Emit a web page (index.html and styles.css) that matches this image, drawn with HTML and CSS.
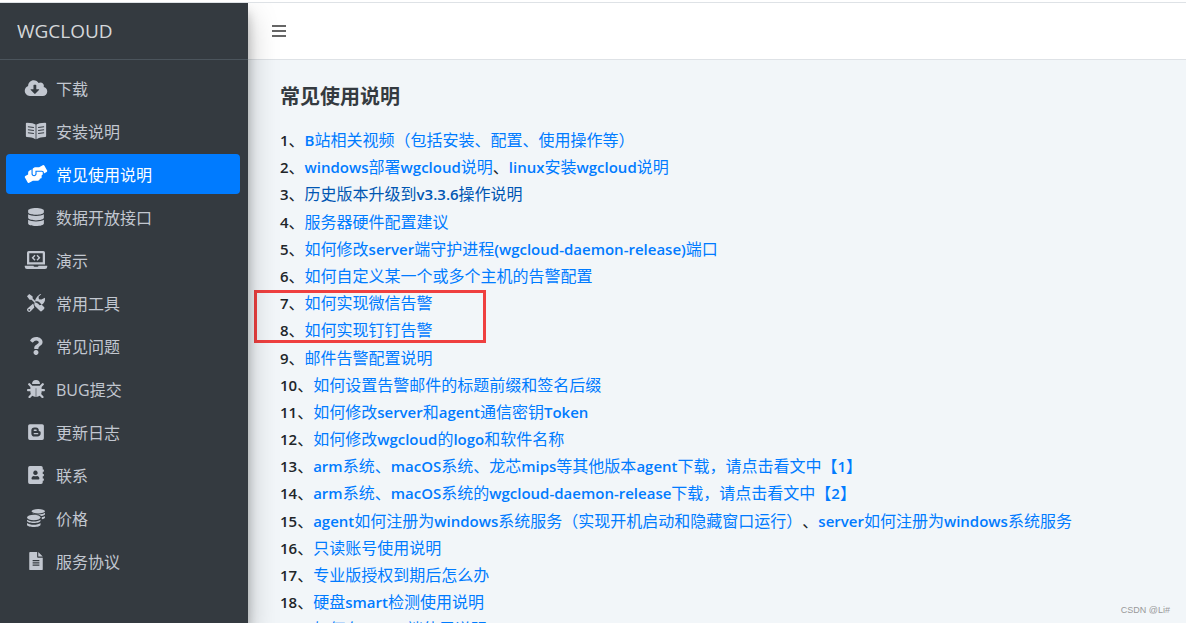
FILE: index.html
```html
<!DOCTYPE html>
<html lang="zh-CN">
<head>
<meta charset="utf-8">
<title>WGCLOUD</title>
<link rel="stylesheet" href="styles.css">
</head>
<body>
<div class="app">
  <aside class="sidebar">
    <a class="brand" href="#">WGCLOUD</a>
    <nav class="menu">
      <a class="item" href="#"><svg class="icon" viewBox="0 0 640 512"><path d="M537.600 226.600c4.100-10.700 6.400-22.400 6.400-34.600 0-53-43-96-96-96-19.700 0-38.100 6-53.300 16.200C367 64.200 315.300 32 256 32c-88.400 0-160 71.600-160 160 0 2.700.1 5.400.2 8.100C40.200 219.800 0 273.200 0 336c0 79.500 64.500 144 144 144h368c70.700 0 128-57.300 128-128 0-61.900-44-113.600-102.400-125.400zm-132.900 88.700L299.300 420.700c-6.200 6.200-16.400 6.200-22.600 0L171.300 315.300c-10.100-10.100-2.900-27.300 11.300-27.300H248V176c0-8.800 7.200-16 16-16h48c8.800 0 16 7.200 16 16v112h65.400c14.200 0 21.400 17.200 11.300 27.300z"/></svg>下载</a>
      <a class="item" href="#"><svg class="icon" viewBox="0 0 640 512"><path fill-rule="evenodd" d="M308 72C270 40 190 18 60 18q-28 0-28 28v350q0 26 28 28c100 4 170 12 218 50q30 20 30 20zM332 72c38-32 118-54 248-54q28 0 28 28v350q0 26-28 28c-100 4-170 12-218 50l-30 20zM90 120v30l170 22v-30zM90 205v30l170 22v-30zM90 290v30l170 22v-30zM550 120v30l-170 22v-30zM550 205v30l-170 22v-30zM550 290v30l-170 22v-30z"/></svg>安装说明</a>
      <a class="item active" href="#" aria-current="page"><svg class="icon" viewBox="0 0 640 512"><path d="M488 192H336v56c0 39.700-32.300 72-72 72s-72-32.300-72-72V126.400l-64.900 39C107.800 176.900 96 197.800 96 220.200v47.300l-80 46.200C.7 322.500-4.600 342.100 4.300 357.400l80 138.600c8.800 15.300 28.400 20.500 43.700 11.700L231.400 448H368c35.300 0 64-28.700 64-64h16c17.700 0 32-14.300 32-32v-64h8c13.300 0 24-10.700 24-24v-48c0-13.300-10.700-24-24-24zm147.700-37.400L555.700 16C546.900.7 527.300-4.500 512 4.300L408.600 64H306.400c-12 0-23.700 3.400-33.900 9.700L239 94.600c-9.400 5.800-15 16.100-15 27.100V248c0 22.100 17.900 40 40 40s40-17.900 40-40v-88h184c30.900 0 56 25.100 56 56v28.500l80-46.200c15.300-8.900 20.500-28.400 11.700-43.700z"/></svg>常见使用说明</a>
      <a class="item" href="#"><svg class="icon" viewBox="0 0 448 512"><path d="M448 73v46c0 40-100 73-224 73S0 159 0 119V73C0 33 100 0 224 0s224 33 224 73zm0 103v103c0 40-100 73-224 73S0 319 0 279V176c48 33 136 48 224 48s176-15 224-48zm0 160v103c0 40-100 73-224 73S0 479 0 439V336c48 33 136 48 224 48s176-15 224-48z"/></svg>数据开放接口</a>
      <a class="item" href="#"><svg class="icon" viewBox="0 0 640 512"><path fill-rule="evenodd" d="M112 0h416q48 0 48 48v336H64V48Q64 0 112 0zm16 64v256h384V64zM0 416h250q0 32 28 32h84q28 0 28-32h250v32q-4 64-64 64H64Q4 512 0 448z"/><path d="M278 108l28 28-54 56 54 56-28 28-84-84zM362 108l-28 28 54 56-54 56 28 28 84-84z"/></svg>演示</a>
      <a class="item" href="#"><svg class="icon" viewBox="0 0 512 512"><path fill-rule="evenodd" d="M64 0l96 72v56l88 88c33-15 72-10 96 14l117 117q18 18 18 18 33 33 0 66l-48 48q-34 33-66 0L231 345c-26-26-28-65-14-97l-88-88H73L0 64zM508 109c14 57-1 119-45 163-29 29-66 44-104 46-50-52-84-79-124-77-9-60 7-110 33-136C311 54 373-9 403 4L329 78l11 68 68 11zM195 324c0 24 6 40 14 62L105 491q-42 42-84 0-42-42 0-84l156-136zM64 424a24 24 0 1 0 .1 0z"/></svg>常用工具</a>
      <a class="item" href="#"><svg class="icon" viewBox="0 0 384 512"><path d="M202 0C122 0 69 33 28 91q-8 12 4 22l56 42q11 8 21-3c29-36 48-56 89-56 32 0 72 21 72 52 0 64-130 60-130 176v6q0 14 14 14h94q14 0 14-14c0-75 117-85 117-185C379 62 292 0 202 0zM192 373a70 70 0 1 0 .1 0z"/></svg>常见问题</a>
      <a class="item" href="#"><svg class="icon" viewBox="0 0 512 512"><path d="M144 112a112 112 0 0 1 224 0zM511 289c-1 18-16 31-33 31h-62v16c0 22-5 43-14 62l61 61a32 32 0 0 1-46 45l-55-55c-28 20-62 31-98 31V232h-16v248c-36 0-70-11-98-31l-55 55a32 32 0 0 1-46-45l61-61c-9-19-14-40-14-62v-16H34c-18 0-33-13-34-31-1-18 14-33 32-33h64v-59l-55-54a32 32 0 0 1 46-46l62 63h214l62-63a32 32 0 0 1 46 46l-55 54v59h64c18 0 33 15 31 33z"/></svg>BUG提交</a>
      <a class="item" href="#"><svg class="icon" viewBox="0 0 448 512"><path fill-rule="evenodd" d="M48 32h352q48 0 48 48v352q0 48-48 48H48q-48 0-48-48V80q0-48 48-48zM178 128c-54 0-86 34-86 84v84c0 54 34 88 88 88h88c54 0 88-34 88-82v-32c0-26-16-38-38-38-14 0-14-8-14-24 0-50-34-80-80-80zm0 60h48c30 0 30 38 0 38h-48c-30 0-30-38 0-38zm0 94h92c30 0 30 40 0 40h-92c-30 0-30-40 0-40z"/></svg>更新日志</a>
      <a class="item" href="#"><svg class="icon" viewBox="0 0 448 512"><path fill-rule="evenodd" d="M48 0h320q48 0 48 48v48h20q12 0 12 12v40q0 12-12 12h-20v64h20q12 0 12 12v40q0 12-12 12h-20v64h20q12 0 12 12v40q0 12-12 12h-20v48q0 48-48 48H48q-48 0-48-48V48Q0 0 48 0zm160 128a64 64 0 1 0 .1 0zM96 358q0 26 26 26h172q26 0 26-26c0-50-30-77-67-77q-45 16-90 0c-37 0-67 27-67 77z"/></svg>联系</a>
      <a class="item" href="#"><svg class="icon" viewBox="0 0 512 512"><ellipse cx="320" cy="64" rx="192" ry="64"/><path d="M512 110v34c0 25-44 48-108 58-34-34-100-50-180-54-34-8-66-18-84-34 82 52 292 56 372-4zM512 206v34c0 22-36 42-92 54v-58q58-10 92-30z"/><ellipse cx="192" cy="240" rx="192" ry="80"/><path d="M0 304c80 66 304 66 384 0v32c0 84-384 84-384 0zM0 400c80 66 304 66 384 0v48c0 84-384 84-384 0z"/></svg>价格</a>
      <a class="item" href="#"><svg class="icon" viewBox="0 0 384 512"><path fill-rule="evenodd" d="M24 0h200v136q0 24 24 24h136v328q0 24-24 24H24q-24 0-24-24V24Q0 0 24 0zM96 224v40h192v-40zM96 288v40h192v-40zM96 352v40h192v-40zM256 0l128 128H256z"/></svg>服务协议</a>
    </nav>
  </aside>
  <div class="main">
    <header class="topbar">
      <button class="toggle" type="button" aria-label="菜单"><svg class="bars" viewBox="0 0 14 14"><path d="M0 1h14v2H0zM0 6h14v2H0zM0 11h14v2H0z"/></svg></button>
    </header>
    <main class="content">
      <h1 class="title">常见使用说明</h1>
      <div class="list">
        <p class="row"><b>1</b>、<a href="#"><b>B</b>站相关视频（包括安装、配置、使用操作等）</a></p>
        <p class="row"><b>2</b>、<a href="#"><b>windows</b>部署<b>wgcloud</b>说明</a>、<a href="#"><b>linux</b>安装<b>wgcloud</b>说明</a></p>
        <p class="row"><b>3</b>、<a class="hovered" href="#">历史版本升级到<b>v3.3.6</b>操作说明</a></p>
        <p class="row"><b>4</b>、<a href="#">服务器硬件配置建议</a></p>
        <p class="row"><b>5</b>、<a href="#">如何修改<b>server</b>端守护进程<b>(wgcloud-daemon-release)</b>端口</a></p>
        <p class="row"><b>6</b>、<a href="#">如何自定义某一个或多个主机的告警配置</a></p>
        <div class="marked">
          <p class="row"><b>7</b>、<a href="#">如何实现微信告警</a></p>
          <p class="row"><b>8</b>、<a href="#">如何实现钉钉告警</a></p>
        </div>
        <p class="row"><b>9</b>、<a href="#">邮件告警配置说明</a></p>
        <p class="row"><b>10</b>、<a href="#">如何设置告警邮件的标题前缀和签名后缀</a></p>
        <p class="row"><b>11</b>、<a href="#">如何修改<b>server</b>和<b>agent</b>通信密钥<b>Token</b></a></p>
        <p class="row"><b>12</b>、<a href="#">如何修改<b>wgcloud</b>的<b>logo</b>和软件名称</a></p>
        <p class="row"><b>13</b>、<a href="#"><b>arm</b>系统、<b>macOS</b>系统、龙芯<b>mips</b>等其他版本<b>agent</b>下载，请点击看文中【<b>1</b>】</a></p>
        <p class="row"><b>14</b>、<a href="#"><b>arm</b>系统、<b>macOS</b>系统的<b>wgcloud-daemon-release</b>下载，请点击看文中【<b>2</b>】</a></p>
        <p class="row"><b>15</b>、<a href="#"><b>agent</b>如何注册为<b>windows</b>系统服务（实现开机启动和隐藏窗口运行）</a>、<a href="#"><b>server</b>如何注册为<b>windows</b>系统服务</a></p>
        <p class="row"><b>16</b>、<a href="#">只读账号使用说明</a></p>
        <p class="row"><b>17</b>、<a href="#">专业版授权到期后怎么办</a></p>
        <p class="row"><b>18</b>、<a href="#">硬盘<b>smart</b>检测使用说明</a></p>
        <p class="row"><b>19</b>、<a href="#">如何在<b>server</b>端使用说明</a></p>
      </div>
    </main>
  </div>
  <span class="watermark">CSDN @Li#</span>
</div>
</body>
</html>
```
FILE: styles.css
```css
*, *::before { box-sizing: border-box; }
body {
  margin: 0;
  padding-top: 2px;
  font-family: "Open Sans", "Noto Sans CJK SC", sans-serif;
  font-size: 16px;
  color: #212529;
  background: #fff;
}
a { color: #007bff; text-decoration: none; }
.app {
  position: relative;
  display: flex;
  height: calc(100vh - 2px);
  overflow: hidden;
  border-top: 1px solid #dee2e6;
  background: #f2f6f9;
}
.sidebar {
  flex: 0 0 248px;
  background: #343a40;
  box-shadow: 0 14px 28px rgba(0,0,0,.25), 0 10px 10px rgba(0,0,0,.22);
  z-index: 1;
}
.brand {
  display: flex;
  align-items: center;
  height: 57px;
  padding-left: 17px;
  border-bottom: 1px solid #4b545c;
  color: #d4d7da;
  font-size: 19px;
}
.menu {
  display: flex;
  flex-direction: column;
  gap: 3px;
  padding: 8px;
  padding-left: 6px;
}
.item {
  display: flex;
  align-items: center;
  gap: 8px;
  height: 40px;
  padding-left: 18px;
  border-radius: 4px;
  color: #c2c7d0;
}
.item.active { background: #007bff; color: #fff; }
.icon { width: 24px; height: 18px; fill: currentColor; }
.main { flex: 1; min-width: 0; }
.topbar {
  display: flex;
  align-items: center;
  height: 57px;
  padding-left: 24px;
  background: #fff;
  border-bottom: 1px solid #dee2e6;
}
.toggle { display: flex; padding: 0; border: 0; background: none; }
.bars { width: 14px; height: 14px; fill: #666; }
.content { padding: 22px 32px 0; }
.title {
  margin: 0 0 15px;
  font-size: 20px;
  line-height: 30px;
  font-weight: 700;
  color: #343a40;
}
.row {
  margin: 0;
  line-height: 1.7;
  white-space: nowrap;
  text-spacing-trim: space-all;
}
.row b { font-size: 15px; font-weight: 600; line-height: 1; }
.hovered { color: #0056b3; }
.marked { position: relative; }
.marked::before {
  content: "";
  position: absolute;
  inset: 0 auto 2px -26px;
  width: 232px;
  border: 3px solid #ef4040;
  pointer-events: none;
}
.watermark {
  position: absolute;
  right: 16px;
  bottom: 8px;
  font: 9px "Liberation Sans", sans-serif;
  color: #999;
}
```
